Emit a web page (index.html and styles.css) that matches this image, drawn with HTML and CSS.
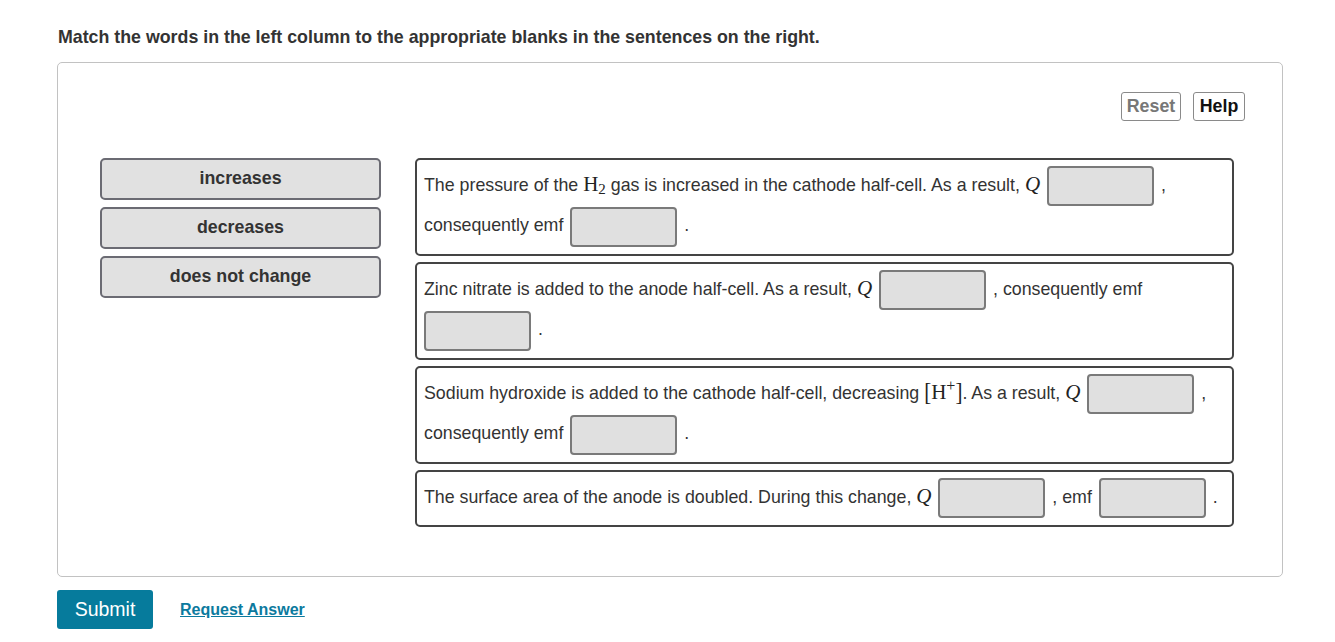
FILE: index.html
```html
<!DOCTYPE html>
<html lang="en">
<head>
<meta charset="utf-8">
<title>Match the words</title>
<link rel="stylesheet" href="styles.css">
</head>
<body>
<div class="page">
  <h2 class="prompt">Match the words in the left column to the appropriate blanks in the sentences on the right.</h2>
  <div class="panel">
    <div class="toolbar">
      <button class="tool reset">Reset</button>
      <button class="tool help">Help</button>
    </div>
    <div class="match">
      <div class="words">
        <div class="word">increases</div>
        <div class="word">decreases</div>
        <div class="word">does not change</div>
      </div>
      <div class="sentences">
        <div class="sentence">
          <div class="line">The pressure of the <span class="math">H<sub>2</sub></span> gas is increased in the cathode half-cell. As a result, <span class="math var">Q</span> <span class="blank"></span> ,</div>
          <div class="line">consequently emf <span class="blank"></span> .</div>
        </div>
        <div class="sentence">
          <div class="line">Zinc nitrate is added to the anode half-cell. As a result, <span class="math var">Q</span> <span class="blank"></span> , consequently emf</div>
          <div class="line"><span class="blank first"></span> .</div>
        </div>
        <div class="sentence">
          <div class="line">Sodium hydroxide is added to the cathode half-cell, decreasing <span class="math"><span class="br">[</span>H<sup>+</sup><span class="br">]</span></span>. As a result, <span class="math var">Q</span> <span class="blank"></span> ,</div>
          <div class="line">consequently emf <span class="blank"></span> .</div>
        </div>
        <div class="sentence">
          <div class="line">The surface area of the anode is doubled. During this change, <span class="math var">Q</span> <span class="blank"></span> , emf <span class="blank"></span> .</div>
        </div>
      </div>
    </div>
  </div>
  <div class="actions">
    <button class="submit">Submit</button>
    <a class="request" href="#">Request Answer</a>
  </div>
</div>
</body>
</html>
```

FILE: styles.css
```css
html, body {
  margin: 0;
  padding: 0;
  background: #fff;
}
body {
  font-family: "Liberation Sans", Arial, sans-serif;
  color: #333;
  font-size: 17.8px;
}
.page {
  padding: 27px 52px 0 57px;
}
.prompt {
  margin: 0 0 15px 1px;
  font-size: 17.8px;
  line-height: 20px;
  font-weight: bold;
  color: #333;
}
.panel {
  border: 1px solid #c2c2c2;
  border-radius: 5px;
  padding: 29px 37px 49px 42px;
}
.toolbar {
  display: flex;
  justify-content: flex-end;
  gap: 12px;
  height: 29px;
}
.tool {
  font-family: "Liberation Sans", Arial, sans-serif;
  font-size: 17.8px;
  font-weight: bold;
  background: #fff;
  border: 1px solid #8a8a8a;
  border-radius: 3px;
  padding: 0 4px;
  height: 29px;
}
.reset { color: #777; width: 60px; }
.help { color: #111; width: 52px; }
.match {
  display: flex;
  align-items: flex-start;
  gap: 34px;
  margin-top: 37px;
  padding-right: 11px;
}
.words {
  display: flex;
  flex-direction: column;
  gap: 7px;
  width: 281px;
  flex: none;
}
.word {
  box-sizing: border-box;
  height: 42px;
  background: #e1e1e1;
  border: 2px solid #6b6b73;
  border-radius: 5px;
  text-align: center;
  font-weight: bold;
  line-height: 36px;
  color: #333;
}
.sentences {
  flex: 1;
  display: flex;
  flex-direction: column;
  gap: 6px;
}
.sentence {
  border: 2px solid #444;
  border-radius: 5px;
  padding: 6px 7px 6px;
}
.line {
  height: 41px;
  line-height: 37px;
  white-space: nowrap;
}
.math {
  font-family: "Liberation Serif", "Times New Roman", serif;
  font-size: 21px;
  color: #222;
}
.math sub {
  font-size: 15px;
  vertical-align: -3px;
  line-height: 0;
}
.math sup {
  font-size: 16px;
  vertical-align: 8px;
  line-height: 0;
}
.br {
  display: inline-block;
  transform: scaleY(1.2);
}
.var {
  font-style: italic;
}
.blank {
  display: inline-block;
  box-sizing: border-box;
  width: 107px;
  height: 40px;
  vertical-align: top;
  margin: 0 2px;
  background: #e0e0e0;
  border: 2px solid #7a7a7a;
  border-radius: 4px;
}
.blank.first {
  margin-left: 0;
}
.actions {
  display: flex;
  align-items: center;
  gap: 27px;
  margin-top: 13px;
}
.submit {
  font-family: "Liberation Sans", Arial, sans-serif;
  background: #067b9c;
  color: #fff;
  border: none;
  border-radius: 3px;
  width: 96px;
  height: 39px;
  font-size: 19.5px;
}
.request {
  color: #0c7a9e;
  font-weight: bold;
  font-size: 16px;
  text-decoration: underline;
}
```
